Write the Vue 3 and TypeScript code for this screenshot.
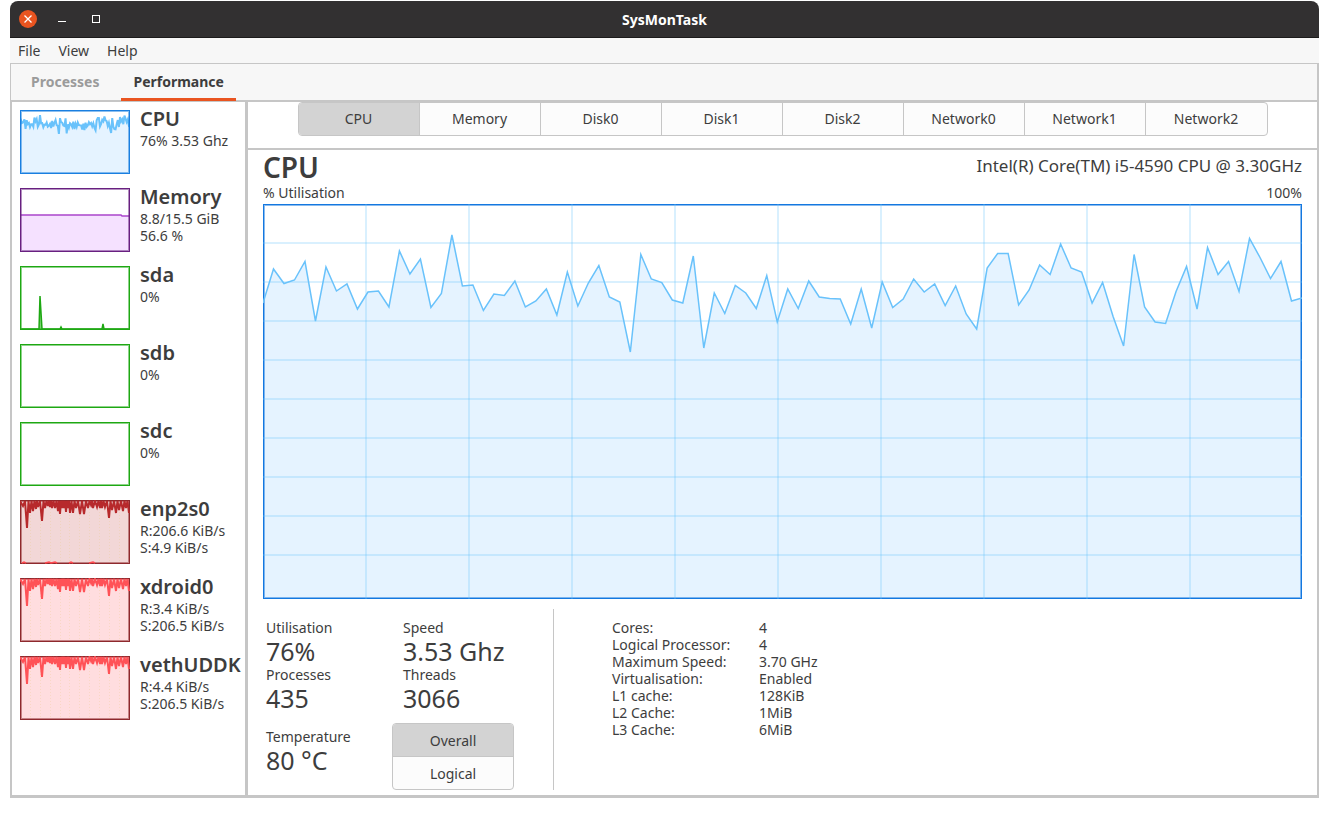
<script setup lang="ts">
import { ref } from 'vue'

interface Device {
  name: string
  lines: string[]
  kind: 'cpu' | 'memory' | 'disk' | 'net-dark' | 'net-light'
}

const menus = ['File', 'View', 'Help']
const pages = ['Processes', 'Performance']
const views = ['CPU', 'Memory', 'Disk0', 'Disk1', 'Disk2', 'Network0', 'Network1', 'Network2']
const modes = ['Overall', 'Logical']
const page = ref('Performance')
const view = ref('CPU')
const mode = ref('Overall')

const devices: Device[] = [
  { name: 'CPU', lines: ['76% 3.53 Ghz'], kind: 'cpu' },
  { name: 'Memory', lines: ['8.8/15.5 GiB', '56.6 %'], kind: 'memory' },
  { name: 'sda', lines: ['0%'], kind: 'disk' },
  { name: 'sdb', lines: ['0%'], kind: 'disk' },
  { name: 'sdc', lines: ['0%'], kind: 'disk' },
  { name: 'enp2s0', lines: ['R:206.6 KiB/s', 'S:4.9 KiB/s'], kind: 'net-dark' },
  { name: 'xdroid0', lines: ['R:3.4 KiB/s', 'S:206.5 KiB/s'], kind: 'net-light' },
  { name: 'vethUDDK', lines: ['R:4.4 KiB/s', 'S:206.5 KiB/s'], kind: 'net-light' },
]

const facts = [
  ['Cores:', '4'],
  ['Logical Processor:', '4'],
  ['Maximum Speed:', '3.70 GHz'],
  ['Virtualisation:', 'Enabled'],
  ['L1 cache:', '128KiB'],
  ['L2 Cache:', '1MiB'],
  ['L3 Cache:', '6MiB'],
]

// Distance of each sample below the 100% line, on a 1039 x 395 canvas.
const samples = [
  99, 65, 79.5, 76, 57.5, 117, 63, 87, 80, 105, 88, 87, 103, 47, 70, 55, 103.5, 89.5, 31, 82,
  81, 106.5, 90, 91.5, 77, 103, 97, 85, 111, 68, 102, 79, 61.5, 93, 98, 148, 50.5, 75, 78.5, 96,
  99, 52, 144, 89, 109.5, 81.5, 89, 104.5, 71.5, 118, 85, 104.5, 77, 93, 94.5, 95, 120, 85, 124, 78,
  103.5, 95, 75, 88, 80, 101.5, 82, 110, 125, 64, 49.5, 49.5, 101, 86, 61, 70.5, 40, 64, 68, 99,
  78.5, 112.5, 142, 50.5, 103, 118, 119.5, 87.5, 62.5, 105, 43.5, 70.5, 57.5, 87.5, 34.5, 53.5, 74.5, 57.5, 97, 94,
]

function trace(width: number, height: number): string {
  return samples
    .map((y, i) => `${((i * width) / (samples.length - 1)).toFixed(2)},${((y * height) / 395).toFixed(2)}`)
    .join(' ')
}

const mainTrace = trace(1039, 395)
const miniTrace = trace(110, 64)

// Dips of the network throughput: horizontal position and depth.
const dips = [
  [3, 6], [7, 28], [10, 13], [13, 11], [16, 9], [18, 7], [22, 21], [25, 8], [28, 6], [30, 7],
  [32, 8], [35, 8], [38, 11], [40, 14], [42, 8], [44, 8], [46, 12], [48, 8], [50, 13], [53, 13],
  [56, 8], [60, 14], [64, 14], [68, 8], [71, 5], [73, 8], [77, 7], [80, 8], [82, 8], [85, 7],
  [89, 18], [92, 10], [96, 13], [99, 10], [103, 11], [106, 8], [109, 13],
]
const dipTrace = ['0,1', ...dips.map(([x, d], i) => {
  const next = dips[i + 1]
  const up = next ? ` ${(x + next[0]) / 2},1` : ''
  return `${x},${d}${up}`
})].join(' ')
</script>

<template>
  <div class="window">
    <header class="titlebar">
      <div class="controls">
        <button class="control close" aria-label="Close">
          <svg width="18" height="18" viewBox="0 0 18 18">
            <circle cx="9" cy="9" r="9" fill="#e95420" />
            <path d="M5.5 5.5l7 7M12.500 5.500l-7 7" stroke="#fff" stroke-width="1.300" />
          </svg>
        </button>
        <button class="control" aria-label="Minimise">
          <svg width="18" height="18" viewBox="0 0 18 18"><path d="M5 11.5h8" stroke="#fff" /></svg>
        </button>
        <button class="control" aria-label="Maximise">
          <svg width="18" height="18" viewBox="0 0 18 18"><rect x="5.500" y="5.500" width="7" height="7" fill="none" stroke="#fff" /></svg>
        </button>
      </div>
      <h1>SysMonTask</h1>
    </header>
    <nav class="menubar">
      <button v-for="m in menus" :key="m">{{ m }}</button>
    </nav>
    <div class="pages" role="tablist">
      <button v-for="p in pages" :key="p" role="tab" :aria-selected="page === p" :class="{ active: page === p }" @click="page = p">
        {{ p }}
      </button>
    </div>

    <main class="body">
      <aside class="devices">
        <button v-for="(d, i) in devices" :key="d.name" class="device">
          <svg class="mini" :class="d.kind" width="110" height="64" viewBox="0 0 110 64">
            <template v-if="d.kind === 'cpu'">
              <polygon :points="`0,64 ${miniTrace} 110,64`" fill="#e5f3ff" />
              <polyline :points="miniTrace" fill="none" stroke="#69c2fb" stroke-width="2" />
            </template>
            <template v-else-if="d.kind === 'memory'">
              <path d="M0 27H101L102 28H110V64H0Z" fill="#f5e1ff" />
              <path d="M0 27H101L102 28H110" fill="none" stroke="#aa45cc" stroke-width="1.500" />
            </template>
            <template v-else-if="d.name === 'sda'">
              <path d="M1 63H19L20 30L22 63H40L41 61L42 63H82L83 58L84 63H109" fill="#7bd272" stroke="#1ea813" stroke-width="1.500" />
            </template>
            <template v-else-if="d.kind !== 'disk'">
              <rect class="area" width="110" height="64" />
              <path d="M10.500 0V64M20.500 0V64M30.500 0V64M40.500 0V64M49.500 0V64M59.500 0V64M69.500 0V64M79.500 0V64M89.500 0V64M99.500 0V64" stroke="#e8c878" stroke-opacity=".25" stroke-dasharray="1 2" />
            </template>
            <rect class="edge" x=".5" y=".5" width="109" height="63" />
            <rect class="edge inner" x="1.500" y="1.500" width="107" height="61" />
            <polyline v-if="d.kind.startsWith('net')" class="dips" :points="dipTrace" />
            <path v-if="i === 5" d="M2 63L4 62L6 63M25 63L29 62L31 63L35 62L37 63M49 63L51 62L53 63M69 63L73 62L75 63" fill="none" stroke="#ff4a50" stroke-width="1.500" />
          </svg>
          <span class="info">
            <span class="name">{{ d.name }}</span>
            <span v-for="line in d.lines" :key="line" class="line">{{ line }}</span>
          </span>
        </button>
      </aside>

      <section class="detail">
        <div class="switcher">
          <div class="views">
            <button v-for="v in views" :key="v" :class="{ active: view === v }" @click="view = v">{{ v }}</button>
          </div>
        </div>

        <div class="panel">
          <div class="heading">
            <h2>CPU</h2>
            <span class="model">Intel(R) Core(TM) i5-4590 CPU @ 3.30GHz</span>
          </div>
          <div class="scale"><span>% Utilisation</span><span>100%</span></div>
          <svg class="chart" viewBox="0 0 1039 395" preserveAspectRatio="none">
            <polygon :points="`0,395 ${mainTrace} 1039,395`" fill="#e5f3ff" />
            <rect class="frame" x=".5" y=".5" width="1038" height="394" />
            <rect class="frame soft" x="1.500" y="1.500" width="1036" height="392" />
            <g stroke="#69c2fb" stroke-opacity=".25" stroke-width="2">
              <path v-for="n in 9" :key="`v${n}`" :d="`M${n * 103} 0V395`" />
              <path v-for="n in 9" :key="`h${n}`" :d="`M0 ${n * 39}H1039`" />
            </g>
            <polyline :points="mainTrace" fill="none" stroke="#69c2fb" stroke-width="1.500" />
          </svg>

          <div class="summary">
            <div class="stats">
              <div class="stat"><span>Utilisation</span><strong>76%</strong></div>
              <div class="stat"><span>Speed</span><strong>3.53 Ghz</strong></div>
              <div class="stat"><span>Processes</span><strong>435</strong></div>
              <div class="stat"><span>Threads</span><strong>3066</strong></div>
              <div class="stat temperature"><span>Temperature</span><strong>80 °C</strong></div>
              <div class="modes">
                <button v-for="m in modes" :key="m" :class="{ active: mode === m }" @click="mode = m">{{ m }}</button>
              </div>
            </div>
            <dl class="facts">
              <template v-for="[label, value] in facts" :key="label">
                <dt>{{ label }}</dt>
                <dd>{{ value }}</dd>
              </template>
            </dl>
          </div>
        </div>
      </section>
    </main>
  </div>
</template>

<style>
body {
  background: #fff;
}
</style>

<style scoped>
.window {
  margin: 1px 10px 0 10px;
  font: 14px/17px "Noto Sans", "Open Sans", sans-serif;
  color: #3d3d3d;
}
.window * {
  box-sizing: border-box;
}
button {
  font: inherit;
  color: inherit;
  background: none;
  border: 0;
  padding: 0;
  margin: 0;
}
h1, h2, dl, dd {
  margin: 0;
}
.titlebar {
  display: grid;
  grid-template-columns: 1fr auto 1fr;
  align-items: center;
  height: 37px;
  border-radius: 8px 8px 0 0;
  border-bottom: 1px solid #1c1b1b;
  background: #323031;
  color: #fff;
}
.titlebar h1 {
  font-size: 14px;
  line-height: 17px;
}
.controls {
  display: flex;
  gap: 16px;
  padding-left: 9px;
}
.control {
  width: 18px;
  height: 18px;
}
.control svg {
  display: block;
}
.menubar {
  display: flex;
  gap: 18px;
  height: 25px;
  padding: 0 8px;
  background: #f7f7f7;
}
.pages {
  display: flex;
  gap: 10px;
  height: 39px;
  padding-left: 8px;
  border: 1px solid #c6c6c6;
  border-width: 1px 2px 2px 1px;
  background: #f7f7f7;
}
.pages button {
  padding: 0 12px 2px;
  font-weight: 700;
  color: #9b9b9b;
}
.pages button.active {
  color: #3d3d3d;
  margin-bottom: -1px;
  border-bottom: 3px solid #e95420;
  padding: 0 12px;
}
.body {
  display: flex;
  border: solid #c6c6c6;
  border-width: 0 2px 3px 2px;
}
.devices {
  flex: none;
  display: flex;
  flex-direction: column;
  gap: 14px;
  width: 236px;
  padding: 8px 0 0 8px;
  border-right: 3px solid #c6c6c6;
  overflow: hidden;
}
.device {
  display: flex;
  gap: 10px;
  height: 64px;
  text-align: left;
}
.mini {
  flex: none;
}
.info {
  flex: 1;
  min-width: 0;
  white-space: nowrap;
}
.name {
  display: block;
  margin-bottom: 4px;
  font-size: 20px;
  line-height: 18px;
  font-weight: 600;
}
.line {
  display: block;
}
.edge {
  fill: none;
  stroke: var(--edge);
}
.inner {
  stroke-opacity: .5;
}
.cpu { --edge: #1a7fe0; }
.memory { --edge: #682080; }
.disk { --edge: #1ea813; }
.net-dark, .net-light { --edge: #8e292d; }
.net-dark .area { fill: #f2d7d7; }
.net-light .area { fill: #ffdddf; }
.dips {
  fill: none;
  stroke: #ff5257;
  stroke-width: 2;
}
.net-dark .dips {
  stroke: #b7292c;
}
.detail {
  flex: 1;
  min-width: 0;
}
.switcher {
  display: flex;
  justify-content: center;
  height: 48px;
  border-bottom: 2px solid #c6c6c6;
}
.views {
  display: flex;
  height: 34px;
  border: 1px solid #c6c6c6;
  border-radius: 4px;
  background: #fcfcfc;
  overflow: hidden;
}
.views button {
  width: 121px;
  padding-bottom: 2px;
  border-right: 1px solid #c6c6c6;
}
.views button:last-child {
  border-right: 0;
}
.views .active, .modes .active {
  background: #d3d3d3;
}
.panel {
  padding: 0 15px 5px;
}
.heading {
  display: flex;
  justify-content: space-between;
  height: 34px;
}
h2 {
  font-size: 28px;
  line-height: 34px;
  font-weight: 600;
}
.model {
  font-size: 17px;
  line-height: 32px;
}
.scale {
  display: flex;
  justify-content: space-between;
  height: 20px;
}
.chart {
  display: block;
  width: 100%;
  height: 395px;
}
.frame {
  fill: none;
  stroke: #1478e0;
}
.soft {
  stroke-opacity: .5;
}
.summary {
  display: flex;
  margin-top: 10px;
}
.stats {
  display: grid;
  grid-template-columns: 126px 122px;
  grid-template-rows: 47px 47px 77px;
  width: 291px;
  height: 181px;
  padding: 10px 0 0 3px;
  border-right: 1px solid #c6c6c6;
}
.stat:nth-child(even) {
  padding-left: 11px;
}
.stat span {
  display: block;
}
.stat strong {
  display: block;
  font-size: 25px;
  line-height: 30px;
  font-weight: 400;
}
.temperature {
  padding-top: 15px;
}
.modes {
  display: flex;
  flex-direction: column;
  height: 67px;
  margin-top: 10px;
  border: 1px solid #c6c6c6;
  border-radius: 4px;
  background: #fcfcfc;
  overflow: hidden;
}
.modes button {
  flex: 1;
}
.modes button + button {
  border-top: 1px solid #c6c6c6;
}
.facts {
  display: grid;
  grid-template-columns: 147px auto;
  grid-auto-rows: 17px;
  margin: 10px 0 0 58px;
}
</style>
